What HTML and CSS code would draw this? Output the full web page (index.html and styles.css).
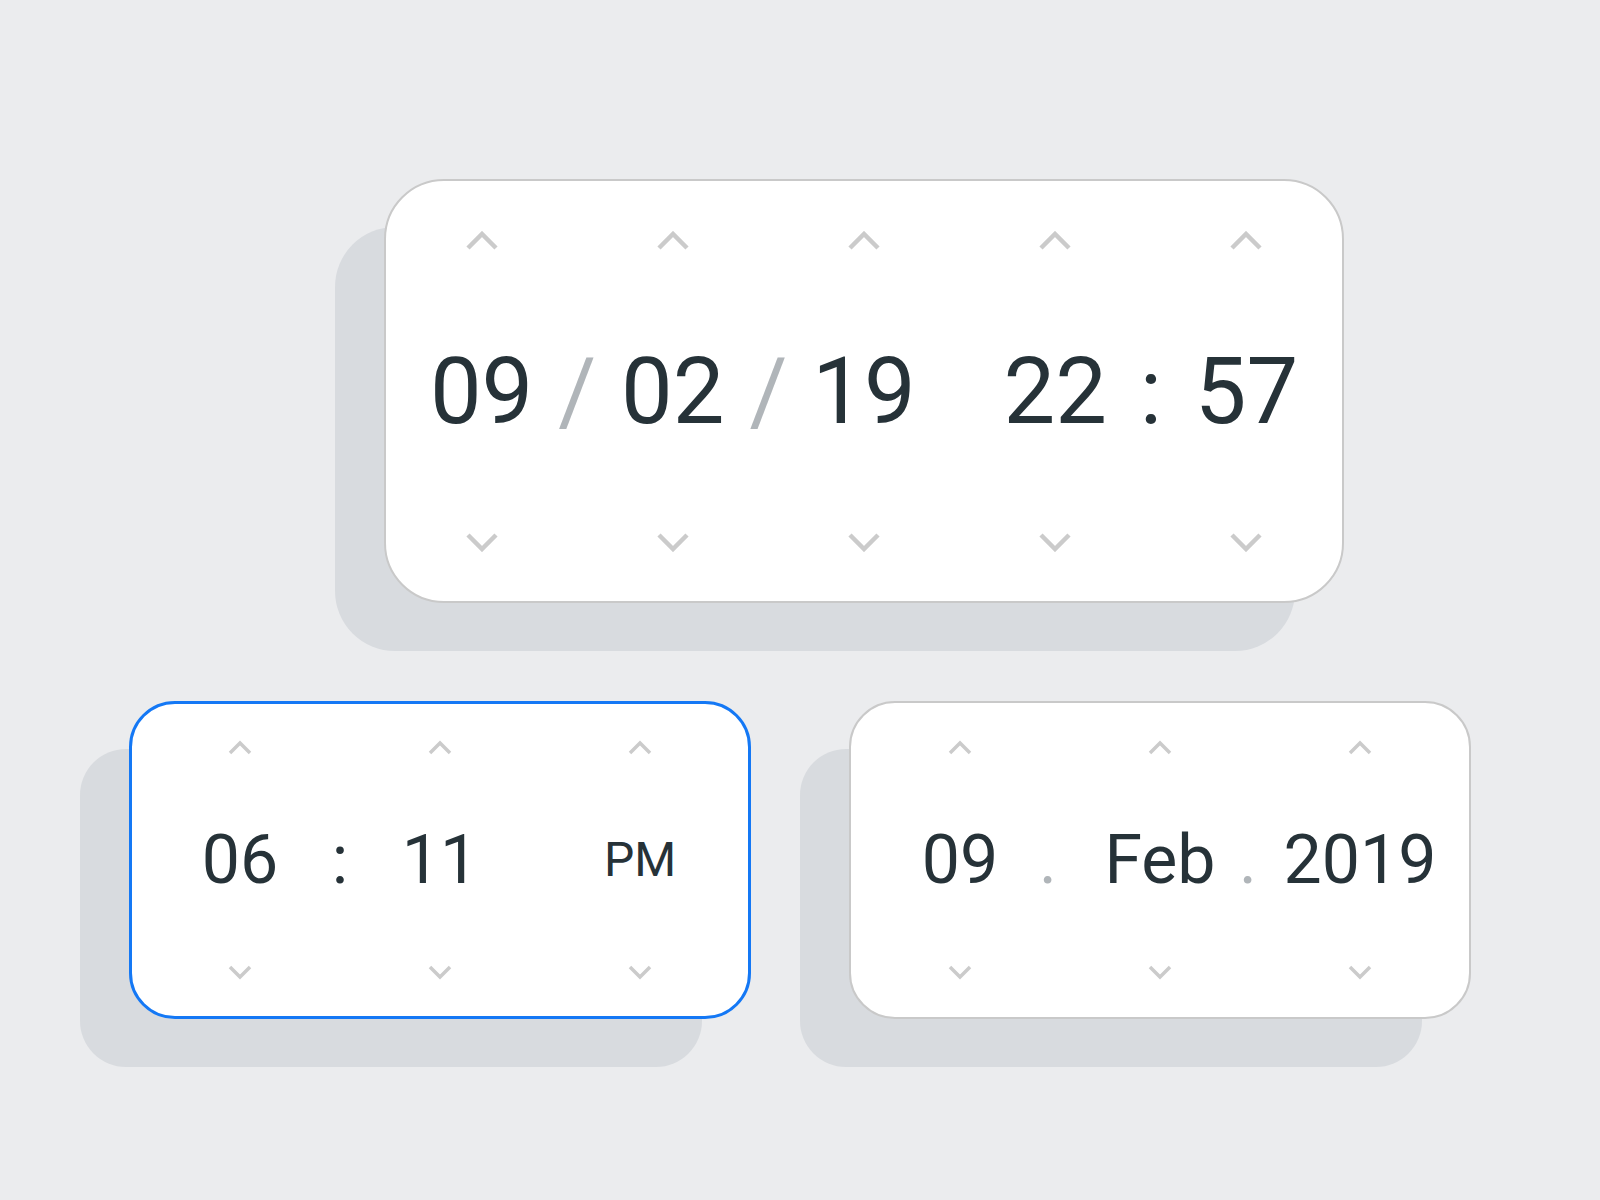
FILE: index.html
```html
<!DOCTYPE html>
<html lang="en">
<head>
    <meta charset="UTF-8">
    <meta name="viewport" content="width=device-width, initial-scale=1.0">
    <title>Date &amp; time pickers</title>
    <link rel="stylesheet" href="styles.css">
</head>
<body>

    <div class="page">

        <!-- full date + time -->
        <div class="picker picker-lg">
            <div class="col">
                <span class="arrow"><svg viewBox="0 0 32 20"><polyline points="2,17 16,3 30,17"/></svg></span>
                <span class="val">09</span>
                <span class="arrow"><svg viewBox="0 0 32 20"><polyline points="2,3 16,17 30,3"/></svg></span>
            </div>
            <div class="sep muted">/</div>
            <div class="col">
                <span class="arrow"><svg viewBox="0 0 32 20"><polyline points="2,17 16,3 30,17"/></svg></span>
                <span class="val">02</span>
                <span class="arrow"><svg viewBox="0 0 32 20"><polyline points="2,3 16,17 30,3"/></svg></span>
            </div>
            <div class="sep muted">/</div>
            <div class="col">
                <span class="arrow"><svg viewBox="0 0 32 20"><polyline points="2,17 16,3 30,17"/></svg></span>
                <span class="val">19</span>
                <span class="arrow"><svg viewBox="0 0 32 20"><polyline points="2,3 16,17 30,3"/></svg></span>
            </div>
            <div class="col">
                <span class="arrow"><svg viewBox="0 0 32 20"><polyline points="2,17 16,3 30,17"/></svg></span>
                <span class="val">22</span>
                <span class="arrow"><svg viewBox="0 0 32 20"><polyline points="2,3 16,17 30,3"/></svg></span>
            </div>
            <div class="sep">:</div>
            <div class="col">
                <span class="arrow"><svg viewBox="0 0 32 20"><polyline points="2,17 16,3 30,17"/></svg></span>
                <span class="val">57</span>
                <span class="arrow"><svg viewBox="0 0 32 20"><polyline points="2,3 16,17 30,3"/></svg></span>
            </div>
        </div>

        <div class="row">

            <!-- time, focused -->
            <div class="picker picker-sm active">
                <div class="col">
                    <span class="arrow"><svg viewBox="0 0 24 15"><polyline points="2,13 12,3 22,13"/></svg></span>
                    <span class="val">06</span>
                    <span class="arrow"><svg viewBox="0 0 24 15"><polyline points="2,2 12,12 22,2"/></svg></span>
                </div>
                <div class="sep">:</div>
                <div class="col">
                    <span class="arrow"><svg viewBox="0 0 24 15"><polyline points="2,13 12,3 22,13"/></svg></span>
                    <span class="val">11</span>
                    <span class="arrow"><svg viewBox="0 0 24 15"><polyline points="2,2 12,12 22,2"/></svg></span>
                </div>
                <div class="col">
                    <span class="arrow"><svg viewBox="0 0 24 15"><polyline points="2,13 12,3 22,13"/></svg></span>
                    <span class="val ampm">PM</span>
                    <span class="arrow"><svg viewBox="0 0 24 15"><polyline points="2,2 12,12 22,2"/></svg></span>
                </div>
            </div>

            <!-- date with month name -->
            <div class="picker picker-sm">
                <div class="col">
                    <span class="arrow"><svg viewBox="0 0 24 15"><polyline points="2,13 12,3 22,13"/></svg></span>
                    <span class="val">09</span>
                    <span class="arrow"><svg viewBox="0 0 24 15"><polyline points="2,2 12,12 22,2"/></svg></span>
                </div>
                <div class="sep muted dot"><span>.</span></div>
                <div class="col">
                    <span class="arrow"><svg viewBox="0 0 24 15"><polyline points="2,13 12,3 22,13"/></svg></span>
                    <span class="val">Feb</span>
                    <span class="arrow"><svg viewBox="0 0 24 15"><polyline points="2,2 12,12 22,2"/></svg></span>
                </div>
                <div class="sep muted dot"><span>.</span></div>
                <div class="col">
                    <span class="arrow"><svg viewBox="0 0 24 15"><polyline points="2,13 12,3 22,13"/></svg></span>
                    <span class="val">2019</span>
                    <span class="arrow"><svg viewBox="0 0 24 15"><polyline points="2,2 12,12 22,2"/></svg></span>
                </div>
            </div>

        </div>
    </div>

</body>
</html>
```

FILE: styles.css
```css
body {
    margin: 0;
    background: #ebecee;
    font-family: Roboto, "Liberation Sans", sans-serif;
    color: #263238;
}

.page {
    min-height: 1200px;
    box-sizing: border-box;
    padding-top: 179px;
}

.picker {
    display: flex;
    box-sizing: border-box;
    background: #fff;
    border: 2px solid #c9c9c9;
    box-shadow: -49px 48px 0 0 #d8dbdf;
}

.picker-lg {
    width: 960px;
    height: 424px;
    margin-left: 384px;
    border-radius: 60px;
    padding: 50px 0 49px;
    font-size: 92px;
}

.picker-lg .col {
    flex: 1;
}

.picker-lg .arrow svg {
    width: 32px;
    height: 20px;
    stroke-width: 4.5;
}

.row {
    display: flex;
    gap: 98px;
    margin-top: 98px;
    padding-left: 129px;
}

.picker-sm {
    width: 622px;
    height: 318px;
    border-radius: 46px;
    padding: 37px 0 37px;
    justify-content: center;
    font-size: 68px;
}

.picker-sm.active {
    border: 3px solid #1478f5;
    padding: 36px 0 36px;
}

.picker-sm .col {
    width: 200px;
}

.picker-sm .arrow svg {
    width: 24px;
    height: 15px;
    stroke-width: 3.5;
}

.col {
    display: flex;
    flex-direction: column;
    align-items: center;
    justify-content: space-between;
}

.arrow {
    display: flex;
}

.arrow svg {
    fill: none;
    stroke: #cbcbcb;
    stroke-linejoin: miter;
}

.val {
    line-height: 1;
    white-space: nowrap;
}

.ampm {
    font-size: 48px;
}

.sep {
    width: 0;
    display: flex;
    justify-content: center;
    align-items: center;
    line-height: 1;
}

.muted {
    color: #b0b5b9;
}

.dot span {
    margin-right: 24px;
}
```
